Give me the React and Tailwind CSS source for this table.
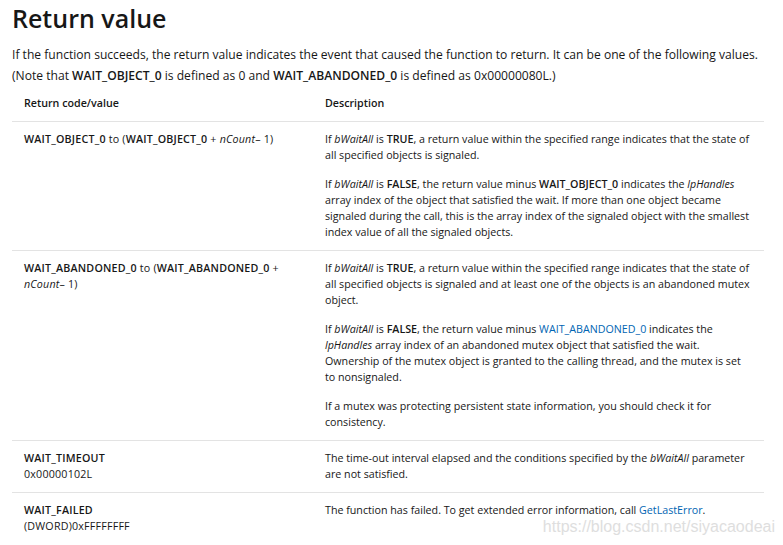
import React from 'react';

const Code = ({ children }) => <span className="font-semibold">{children}</span>;
const Em = ({ children }) => <i>{children}</i>;
const Link = ({ children }) => <span className="text-[#0065b3]">{children}</span>;

const rows = [
  {
    code: (
      <>
        <Code>WAIT_OBJECT_0</Code> to (<Code>WAIT_OBJECT_0</Code> + <Em>nCount</Em>– 1)
      </>
    ),
    desc: [
      <>
        If <Em>bWaitAll</Em> is <Code>TRUE</Code>, a return value within the specified range indicates that the state of all specified objects is signaled.
      </>,
      <>
        If <Em>bWaitAll</Em> is <Code>FALSE</Code>, the return value minus <Code>WAIT_OBJECT_0</Code> indicates the <Em>lpHandles</Em> array index of the object that satisfied the wait. If more than one object became signaled during the call, this is the array index of the signaled object with the smallest index value of all the signaled objects.
      </>,
    ],
  },
  {
    code: (
      <>
        <Code>WAIT_ABANDONED_0</Code> to (<Code>WAIT_ABANDONED_0</Code> + <Em>nCount</Em>– 1)
      </>
    ),
    desc: [
      <>
        If <Em>bWaitAll</Em> is <Code>TRUE</Code>, a return value within the specified range indicates that the state of all specified objects is signaled and at least one of the objects is an abandoned mutex object.
      </>,
      <>
        If <Em>bWaitAll</Em> is <Code>FALSE</Code>, the return value minus <Link>WAIT_ABANDONED_0</Link> indicates the <Em>lpHandles</Em> array index of an abandoned mutex object that satisfied the wait. Ownership of the mutex object is granted to the calling thread, and the mutex is set to nonsignaled.
      </>,
      <>If a mutex was protecting persistent state information, you should check it for consistency.</>,
    ],
  },
  {
    code: (
      <>
        <Code>WAIT_TIMEOUT</Code>
        <br />
        0x00000102L
      </>
    ),
    desc: [
      <>
        The time-out interval elapsed and the conditions specified by the <Em>bWaitAll</Em> parameter are not satisfied.
      </>,
    ],
  },
  {
    code: (
      <>
        <Code>WAIT_FAILED</Code>
        <br />
        (DWORD)0xFFFFFFFF
      </>
    ),
    desc: [
      <>
        The function has failed. To get extended error information, call <Link>GetLastError</Link>.
      </>,
    ],
  },
];

export default function App() {
  return (
    <div className="relative w-[783px] h-[545px] overflow-hidden bg-white text-[#171717] px-[12px]" style={{ fontFamily: '"Open Sans", "Noto Sans", sans-serif' }}>
      <h2 className="text-[25px] leading-[36px] font-semibold">Return value</h2>
      <p className="mt-[8px] w-[760px] text-[12.1px] leading-[21px]">
        If the function succeeds, the return value indicates the event that caused the function to return. It can be one of the following values.
        <br />
        (Note that <Code>WAIT_OBJECT_0</Code> is defined as 0 and <Code>WAIT_ABANDONED_0</Code> is defined as 0x00000080L.)
      </p>
      <table className="w-[752px] border-collapse text-[10.7px] leading-[16px]">
        <thead>
          <tr className="border-b border-[#e3e3e3]">
            <th className="w-[301px] px-[12px] pt-[9px] pb-[10px] text-left font-semibold">Return code/value</th>
            <th className="px-[12px] pt-[9px] pb-[10px] text-left font-semibold">Description</th>
          </tr>
        </thead>
        <tbody>
          {rows.map((r, i) => (
            <tr key={i} className={i < rows.length - 1 ? 'border-b border-[#e3e3e3]' : ''}>
              <td className="align-top px-[12px] pt-[9px] pb-[10px] tracking-[0.2px]">{r.code}</td>
              <td className="align-top px-[12px] pt-[9px] pb-[10px]">
                {r.desc.map((d, j) => (
                  <p key={j} className={j > 0 ? 'mt-[13px]' : ''}>{d}</p>
                ))}
              </td>
            </tr>
          ))}
        </tbody>
      </table>
      <div className="absolute right-[8px] bottom-[9px] text-[16px] leading-[18px] text-[#dedede]" style={{ fontFamily: '"Liberation Sans", Arial, sans-serif' }}>
        https://blog.csdn.net/siyacaodeai
      </div>
    </div>
  );
}
